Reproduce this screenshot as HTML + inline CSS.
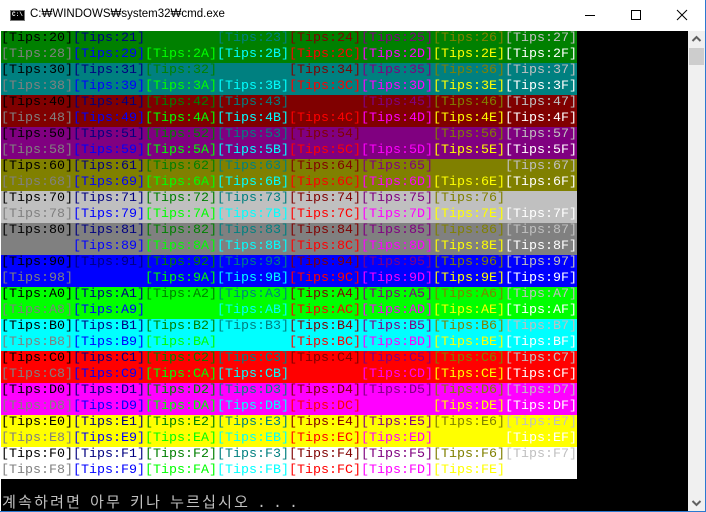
<!DOCTYPE html>
<html><head><meta charset="utf-8"><style>
html,body{margin:0;padding:0;width:706px;height:512px;overflow:hidden;background:#fff}
#win{position:absolute;left:0;top:0;width:705px;height:511px;border-right:1px solid #2b79d0;border-bottom:1px solid #2b79d0;background:#fff;overflow:hidden}
#title{position:absolute;left:0;top:0;width:705px;height:31px;background:#fff}
#ticon{position:absolute;left:10px;top:10px;width:15px;height:11px;background:#000;border:1px solid #777;box-sizing:border-box}
#ticon:after{content:"C:\\";position:absolute;left:1px;top:0px;font:bold 6px "Liberation Mono",monospace;color:#fff}
#ttext{position:absolute;left:30px;top:8px;font:11.5px "Liberation Sans","Noto Sans CJK KR",sans-serif;color:#000}
.btn{position:absolute;top:0;width:46px;height:31px}
#con{position:absolute;left:1px;top:31px;width:687px;height:481px;background:#000;overflow:hidden}
.p{margin:0;font:13.333px/16px "Liberation Mono",monospace}
.r{display:block;width:576px;height:16px;white-space:pre;overflow:hidden}
.r span{display:inline-block;width:72px;height:16px;vertical-align:top}
.b2{background:#008000}.b3{background:#008080}.b4{background:#800000}.b5{background:#800080}.b6{background:#808000}.b7{background:#c0c0c0}.b8{background:#808080}.b9{background:#0000ff}.bA{background:#00ff00}.bB{background:#00ffff}.bC{background:#ff0000}.bD{background:#ff00ff}.bE{background:#ffff00}.bF{background:#ffffff}
.f0{color:#000}.f1{color:#000080}.f2{color:#008000}.f3{color:#008080}.f4{color:#800000}.f5{color:#800080}.f6{color:#808000}.f7{color:#c0c0c0}.f8{color:#808080}.f9{color:#0000ff}.fA{color:#00ff00}.fB{color:#00ffff}.fC{color:#ff0000}.fD{color:#ff00ff}.fE{color:#ffff00}.fF{color:#ffffff}
#msg{position:absolute;left:0;top:465px;color:#c0c0c0;font:15px/16px "Liberation Mono","Noto Sans CJK KR",monospace;white-space:pre}
#msg i{font-style:normal;display:inline-block;width:16px;text-align:center}
#msg b{font-weight:normal;display:inline-block;width:8px}
#sb{position:absolute;left:688px;top:31px;width:17px;height:480px;background:#f0f0f0}
#thumb{position:absolute;left:1px;top:17px;width:15px;height:17px;background:#cdcdcd}
</style></head><body><div id="win">
<div id="title"><div id="ticon"></div><div id="ttext">C:₩WINDOWS₩system32₩cmd.exe</div>
<svg class="btn" style="left:567px" viewBox="0 0 46 31"><line x1="18" y1="15.5" x2="28" y2="15.5" stroke="#000"/></svg>
<svg class="btn" style="left:613px" viewBox="0 0 46 31"><rect x="18.5" y="10.5" width="9" height="9" fill="none" stroke="#000"/></svg>
<svg class="btn" style="left:659px" viewBox="0 0 46 31"><path d="M18 10L28 20M28 10L18 20" stroke="#000"/></svg>
</div>
<div id="con"><div class="p">
<div class="r b2"><span class="f0">[Tips:20]</span><span class="f1">[Tips:21]</span><span class="f2">[Tips:22]</span><span class="f3">[Tips:23]</span><span class="f4">[Tips:24]</span><span class="f5">[Tips:25]</span><span class="f6">[Tips:26]</span><span class="f7">[Tips:27]</span></div>
<div class="r b2"><span class="f8">[Tips:28]</span><span class="f9">[Tips:29]</span><span class="fA">[Tips:2A]</span><span class="fB">[Tips:2B]</span><span class="fC">[Tips:2C]</span><span class="fD">[Tips:2D]</span><span class="fE">[Tips:2E]</span><span class="fF">[Tips:2F]</span></div>
<div class="r b3"><span class="f0">[Tips:30]</span><span class="f1">[Tips:31]</span><span class="f2">[Tips:32]</span><span class="f3">[Tips:33]</span><span class="f4">[Tips:34]</span><span class="f5">[Tips:35]</span><span class="f6">[Tips:36]</span><span class="f7">[Tips:37]</span></div>
<div class="r b3"><span class="f8">[Tips:38]</span><span class="f9">[Tips:39]</span><span class="fA">[Tips:3A]</span><span class="fB">[Tips:3B]</span><span class="fC">[Tips:3C]</span><span class="fD">[Tips:3D]</span><span class="fE">[Tips:3E]</span><span class="fF">[Tips:3F]</span></div>
<div class="r b4"><span class="f0">[Tips:40]</span><span class="f1">[Tips:41]</span><span class="f2">[Tips:42]</span><span class="f3">[Tips:43]</span><span class="f4">[Tips:44]</span><span class="f5">[Tips:45]</span><span class="f6">[Tips:46]</span><span class="f7">[Tips:47]</span></div>
<div class="r b4"><span class="f8">[Tips:48]</span><span class="f9">[Tips:49]</span><span class="fA">[Tips:4A]</span><span class="fB">[Tips:4B]</span><span class="fC">[Tips:4C]</span><span class="fD">[Tips:4D]</span><span class="fE">[Tips:4E]</span><span class="fF">[Tips:4F]</span></div>
<div class="r b5"><span class="f0">[Tips:50]</span><span class="f1">[Tips:51]</span><span class="f2">[Tips:52]</span><span class="f3">[Tips:53]</span><span class="f4">[Tips:54]</span><span class="f5">[Tips:55]</span><span class="f6">[Tips:56]</span><span class="f7">[Tips:57]</span></div>
<div class="r b5"><span class="f8">[Tips:58]</span><span class="f9">[Tips:59]</span><span class="fA">[Tips:5A]</span><span class="fB">[Tips:5B]</span><span class="fC">[Tips:5C]</span><span class="fD">[Tips:5D]</span><span class="fE">[Tips:5E]</span><span class="fF">[Tips:5F]</span></div>
<div class="r b6"><span class="f0">[Tips:60]</span><span class="f1">[Tips:61]</span><span class="f2">[Tips:62]</span><span class="f3">[Tips:63]</span><span class="f4">[Tips:64]</span><span class="f5">[Tips:65]</span><span class="f6">[Tips:66]</span><span class="f7">[Tips:67]</span></div>
<div class="r b6"><span class="f8">[Tips:68]</span><span class="f9">[Tips:69]</span><span class="fA">[Tips:6A]</span><span class="fB">[Tips:6B]</span><span class="fC">[Tips:6C]</span><span class="fD">[Tips:6D]</span><span class="fE">[Tips:6E]</span><span class="fF">[Tips:6F]</span></div>
<div class="r b7"><span class="f0">[Tips:70]</span><span class="f1">[Tips:71]</span><span class="f2">[Tips:72]</span><span class="f3">[Tips:73]</span><span class="f4">[Tips:74]</span><span class="f5">[Tips:75]</span><span class="f6">[Tips:76]</span><span class="f7">[Tips:77]</span></div>
<div class="r b7"><span class="f8">[Tips:78]</span><span class="f9">[Tips:79]</span><span class="fA">[Tips:7A]</span><span class="fB">[Tips:7B]</span><span class="fC">[Tips:7C]</span><span class="fD">[Tips:7D]</span><span class="fE">[Tips:7E]</span><span class="fF">[Tips:7F]</span></div>
<div class="r b8"><span class="f0">[Tips:80]</span><span class="f1">[Tips:81]</span><span class="f2">[Tips:82]</span><span class="f3">[Tips:83]</span><span class="f4">[Tips:84]</span><span class="f5">[Tips:85]</span><span class="f6">[Tips:86]</span><span class="f7">[Tips:87]</span></div>
<div class="r b8"><span class="f8">[Tips:88]</span><span class="f9">[Tips:89]</span><span class="fA">[Tips:8A]</span><span class="fB">[Tips:8B]</span><span class="fC">[Tips:8C]</span><span class="fD">[Tips:8D]</span><span class="fE">[Tips:8E]</span><span class="fF">[Tips:8F]</span></div>
<div class="r b9"><span class="f0">[Tips:90]</span><span class="f1">[Tips:91]</span><span class="f2">[Tips:92]</span><span class="f3">[Tips:93]</span><span class="f4">[Tips:94]</span><span class="f5">[Tips:95]</span><span class="f6">[Tips:96]</span><span class="f7">[Tips:97]</span></div>
<div class="r b9"><span class="f8">[Tips:98]</span><span class="f9">[Tips:99]</span><span class="fA">[Tips:9A]</span><span class="fB">[Tips:9B]</span><span class="fC">[Tips:9C]</span><span class="fD">[Tips:9D]</span><span class="fE">[Tips:9E]</span><span class="fF">[Tips:9F]</span></div>
<div class="r bA"><span class="f0">[Tips:A0]</span><span class="f1">[Tips:A1]</span><span class="f2">[Tips:A2]</span><span class="f3">[Tips:A3]</span><span class="f4">[Tips:A4]</span><span class="f5">[Tips:A5]</span><span class="f6">[Tips:A6]</span><span class="f7">[Tips:A7]</span></div>
<div class="r bA"><span class="f8">[Tips:A8]</span><span class="f9">[Tips:A9]</span><span class="fA">[Tips:AA]</span><span class="fB">[Tips:AB]</span><span class="fC">[Tips:AC]</span><span class="fD">[Tips:AD]</span><span class="fE">[Tips:AE]</span><span class="fF">[Tips:AF]</span></div>
<div class="r bB"><span class="f0">[Tips:B0]</span><span class="f1">[Tips:B1]</span><span class="f2">[Tips:B2]</span><span class="f3">[Tips:B3]</span><span class="f4">[Tips:B4]</span><span class="f5">[Tips:B5]</span><span class="f6">[Tips:B6]</span><span class="f7">[Tips:B7]</span></div>
<div class="r bB"><span class="f8">[Tips:B8]</span><span class="f9">[Tips:B9]</span><span class="fA">[Tips:BA]</span><span class="fB">[Tips:BB]</span><span class="fC">[Tips:BC]</span><span class="fD">[Tips:BD]</span><span class="fE">[Tips:BE]</span><span class="fF">[Tips:BF]</span></div>
<div class="r bC"><span class="f0">[Tips:C0]</span><span class="f1">[Tips:C1]</span><span class="f2">[Tips:C2]</span><span class="f3">[Tips:C3]</span><span class="f4">[Tips:C4]</span><span class="f5">[Tips:C5]</span><span class="f6">[Tips:C6]</span><span class="f7">[Tips:C7]</span></div>
<div class="r bC"><span class="f8">[Tips:C8]</span><span class="f9">[Tips:C9]</span><span class="fA">[Tips:CA]</span><span class="fB">[Tips:CB]</span><span class="fC">[Tips:CC]</span><span class="fD">[Tips:CD]</span><span class="fE">[Tips:CE]</span><span class="fF">[Tips:CF]</span></div>
<div class="r bD"><span class="f0">[Tips:D0]</span><span class="f1">[Tips:D1]</span><span class="f2">[Tips:D2]</span><span class="f3">[Tips:D3]</span><span class="f4">[Tips:D4]</span><span class="f5">[Tips:D5]</span><span class="f6">[Tips:D6]</span><span class="f7">[Tips:D7]</span></div>
<div class="r bD"><span class="f8">[Tips:D8]</span><span class="f9">[Tips:D9]</span><span class="fA">[Tips:DA]</span><span class="fB">[Tips:DB]</span><span class="fC">[Tips:DC]</span><span class="fD">[Tips:DD]</span><span class="fE">[Tips:DE]</span><span class="fF">[Tips:DF]</span></div>
<div class="r bE"><span class="f0">[Tips:E0]</span><span class="f1">[Tips:E1]</span><span class="f2">[Tips:E2]</span><span class="f3">[Tips:E3]</span><span class="f4">[Tips:E4]</span><span class="f5">[Tips:E5]</span><span class="f6">[Tips:E6]</span><span class="f7">[Tips:E7]</span></div>
<div class="r bE"><span class="f8">[Tips:E8]</span><span class="f9">[Tips:E9]</span><span class="fA">[Tips:EA]</span><span class="fB">[Tips:EB]</span><span class="fC">[Tips:EC]</span><span class="fD">[Tips:ED]</span><span class="fE">[Tips:EE]</span><span class="fF">[Tips:EF]</span></div>
<div class="r bF"><span class="f0">[Tips:F0]</span><span class="f1">[Tips:F1]</span><span class="f2">[Tips:F2]</span><span class="f3">[Tips:F3]</span><span class="f4">[Tips:F4]</span><span class="f5">[Tips:F5]</span><span class="f6">[Tips:F6]</span><span class="f7">[Tips:F7]</span></div>
<div class="r bF"><span class="f8">[Tips:F8]</span><span class="f9">[Tips:F9]</span><span class="fA">[Tips:FA]</span><span class="fB">[Tips:FB]</span><span class="fC">[Tips:FC]</span><span class="fD">[Tips:FD]</span><span class="fE">[Tips:FE]</span><span class="fF">[Tips:FF]</span></div>
</div>
<div id="msg"><i>계</i><i>속</i><i>하</i><i>려</i><i>면</i><b> </b><i>아</i><i>무</i><b> </b><i>키</i><i>나</i><b> </b><i>누</i><i>르</i><i>십</i><i>시</i><i>오</i><b> </b><b>.</b><b> </b><b>.</b><b> </b><b>.</b></div>
</div>
<div id="sb"><svg style="position:absolute;left:0;top:0" width="17" height="17"><path d="M4.5 10L8.5 6L12.5 10" fill="none" stroke="#606060" stroke-width="2"/></svg><div id="thumb"></div><svg style="position:absolute;left:0;top:463px" width="17" height="17"><path d="M4.5 7L8.5 11L12.5 7" fill="none" stroke="#606060" stroke-width="2"/></svg></div>
</div></body></html>
